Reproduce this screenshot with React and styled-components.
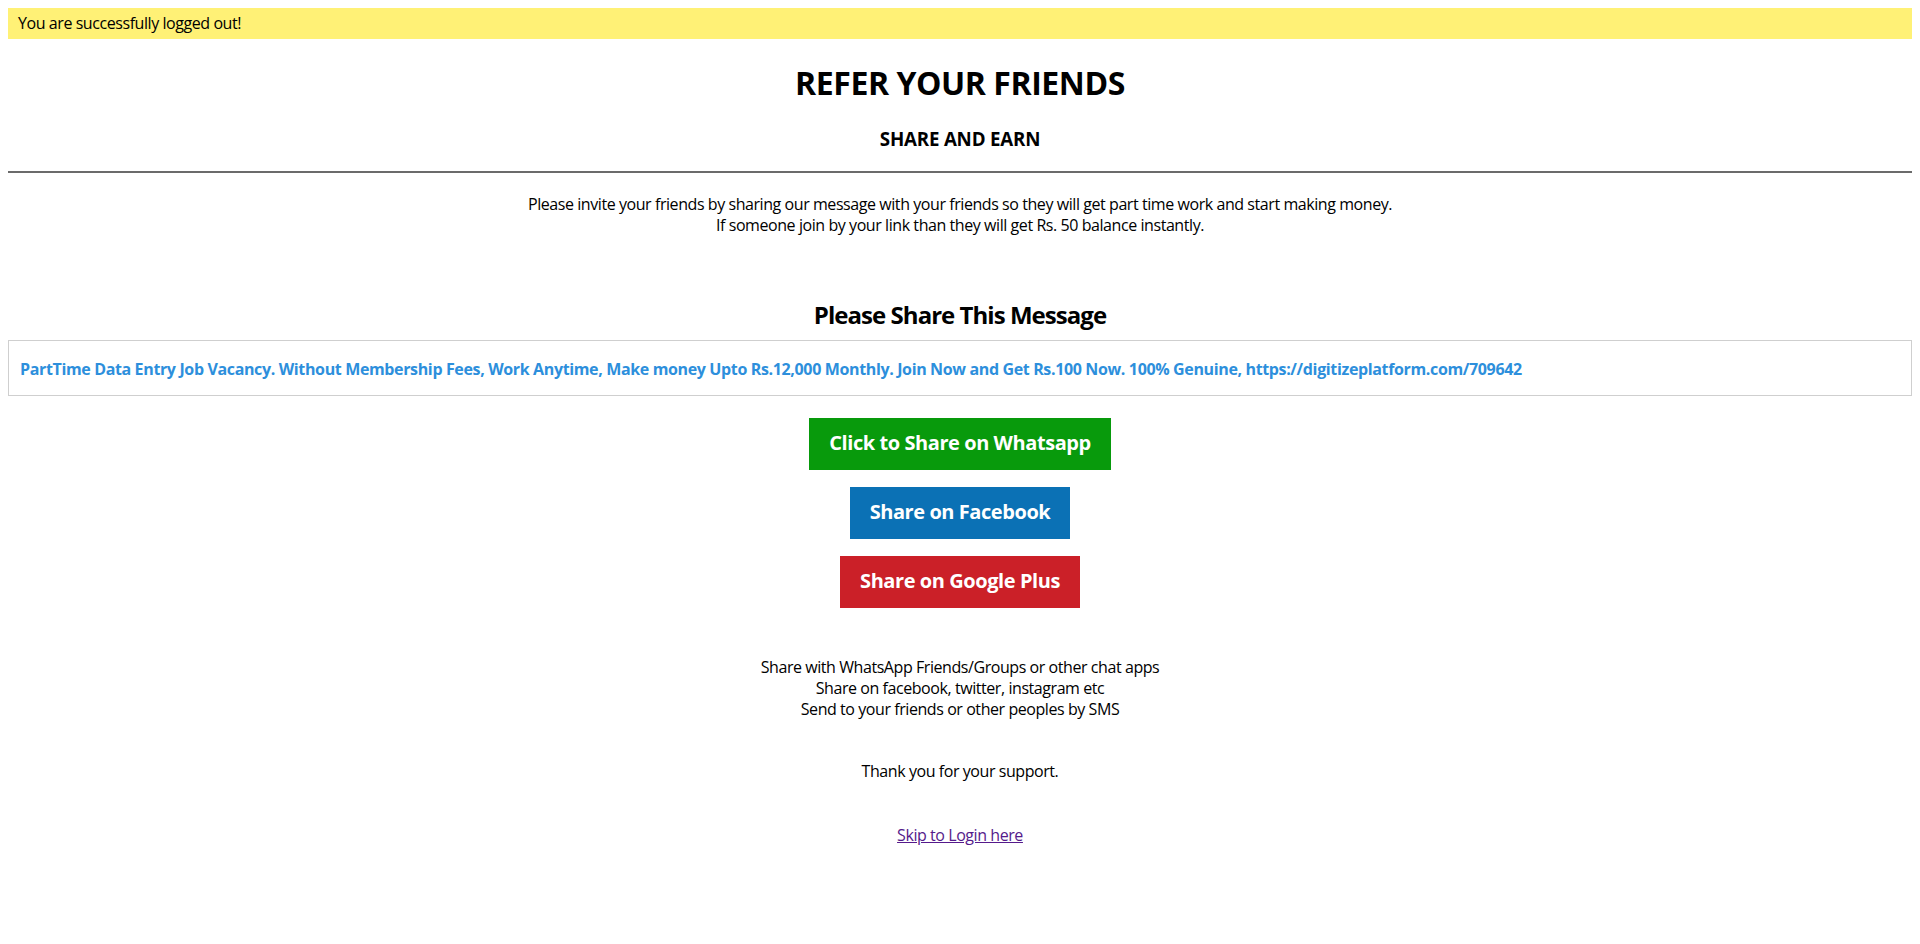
import React from "react";
import styled, { createGlobalStyle } from "styled-components";

const GlobalStyle = createGlobalStyle`
  body {
    margin: 8px;
    background: #fff;
    color: #000;
    font-family: "Open Sans", "Noto Sans", sans-serif;
    font-size: 16px;
    letter-spacing: -0.027em;
    line-height: 21.3px;
  }
`;

const Page = styled.div`
  display: flex;
  flex-direction: column;
`;

const Notice = styled.div`
  height: 31px;
  line-height: 31px;
  padding: 0 10px;
  background: #fff176;
  font-size: 16px;
`;

const Title = styled.h1`
  margin: 24px 0 0;
  font-size: 32px;
  line-height: 40px;
  font-weight: 700;
  text-align: center;
`;

const Subtitle = styled.h3`
  margin: 24px 0 0;
  font-size: 18.72px;
  line-height: 24px;
  font-weight: 700;
  letter-spacing: -0.01em;
  text-align: center;
`;

const Divider = styled.hr`
  margin: 20px 0 0;
  border: none;
  border-top: 2px solid #6b6b6b;
  height: 0;
`;

const Text = styled.p`
  margin: ${(p) => p.$top || 0}px 0 0;
  text-align: center;
  font-size: 16px;
  line-height: 21.3px;
`;

const SectionTitle = styled.h2`
  margin: 62px 0 0;
  font-size: 24px;
  line-height: 32px;
  font-weight: 700;
  letter-spacing: -0.04em;
  text-align: center;
`;

const MessageBox = styled.div`
  margin-top: 9px;
  height: 50px;
  box-sizing: content-box;
  display: flex;
  align-items: center;
  padding: 4px 11px 0;
  border: 1px solid #cfcfcf;
  color: #2d8fdc;
  font-weight: 700;
  font-size: 16px;
  letter-spacing: -0.36px;
  white-space: nowrap;
`;

const ButtonStack = styled.div`
  margin-top: 22px;
  display: flex;
  flex-direction: column;
  align-items: center;
  gap: 17px;
`;

const ShareButton = styled.a`
  display: block;
  height: 52px;
  line-height: 50px;
  padding: 0 20px;
  background: ${(p) => p.$bg};
  color: #fff;
  font-size: 20px;
  font-weight: 700;
  text-decoration: none;
  cursor: pointer;
`;

const SkipLink = styled.a`
  color: #551a8b;
  text-decoration: underline;
`;

export default function App() {
  return (
    <>
      <GlobalStyle />
      <Page>
        <Notice>You are successfully logged out!</Notice>
        <Title>REFER YOUR FRIENDS</Title>
        <Subtitle>SHARE AND EARN</Subtitle>
        <Divider />
        <Text $top={21}>
          Please invite your friends by sharing our message with your friends so they will get part time work and start making money.
          <br />
          If someone join by your link than they will get Rs. 50 balance instantly.
        </Text>
        <SectionTitle>Please Share This Message</SectionTitle>
        <MessageBox>
          PartTime Data Entry Job Vacancy. Without Membership Fees, Work Anytime, Make money Upto Rs.12,000 Monthly. Join Now and Get Rs.100 Now. 100% Genuine, https://digitizeplatform.com/709642
        </MessageBox>
        <ButtonStack>
          <ShareButton $bg="#089a0c">Click to Share on Whatsapp</ShareButton>
          <ShareButton $bg="#0b71b5">Share on Facebook</ShareButton>
          <ShareButton $bg="#cb2028">Share on Google Plus</ShareButton>
        </ButtonStack>
        <Text $top={49}>
          Share with WhatsApp Friends/Groups or other chat apps
          <br />
          Share on facebook, twitter, instagram etc
          <br />
          Send to your friends or other peoples by SMS
        </Text>
        <Text $top={41}>Thank you for your support.</Text>
        <Text $top={42}>
          <SkipLink href="#">Skip to Login here</SkipLink>
        </Text>
      </Page>
    </>
  );
}
